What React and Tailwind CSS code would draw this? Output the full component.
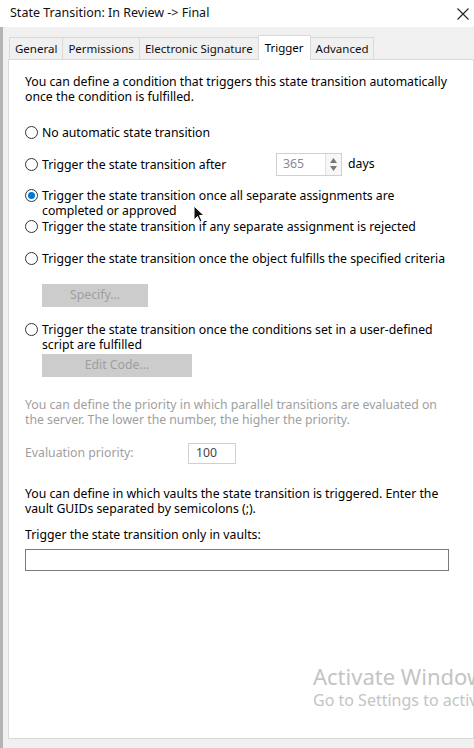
import React from "react";

const font = { fontFamily: '"Noto Sans", "Open Sans", sans-serif' };

function Radio({ checked }) {
  return (
    <span className="mt-[1px] flex h-[13px] w-[13px] shrink-0 items-center justify-center rounded-full border border-[#333] bg-white">
      {checked && <span className="h-[7px] w-[7px] rounded-full bg-[#0078d7]" />}
    </span>
  );
}

function Option({ checked, children, className = "" }) {
  return (
    <div className={"flex items-start gap-[4px] " + className}>
      <Radio checked={checked} />
      <div className="leading-[15px]">{children}</div>
    </div>
  );
}

function Tab({ children, active }) {
  if (active) {
    return (
      <div className="relative z-10 -mb-[1px] flex h-[25px] items-start border border-b-0 border-[#d9d9d9] bg-white px-[6px] pt-[3px] text-black">
        {children}
      </div>
    );
  }
  return (
    <div className="flex h-[22px] items-center border border-b-0 border-r-0 border-[#d9d9d9] bg-[#f0f0f0] px-[5px] text-[#111]">
      {children}
    </div>
  );
}

export default function App() {
  return (
    <div className="relative flex h-[748px] w-[474px] flex-col overflow-hidden bg-[#f0f0f0] text-[12.25px] text-black" style={font}>
      <div className="flex h-[27px] shrink-0 items-center justify-between bg-white pl-[10px] pr-[2px]">
        <span className="text-[12.5px] text-[#111]">State Transition: In Review -&gt; Final</span>
        <svg width="14" height="14" viewBox="0 0 14 14" className="mr-[2px]">
          <path d="M1.5 1.5 L12.5 12.5 M12.5 1.5 L1.5 12.5" stroke="#222" strokeWidth="1.1" />
        </svg>
      </div>
      <div className="flex flex-1 flex-col border-l-[3px] border-[#b4b4b4] pl-[5px]">
        <div className="mt-[8px] flex items-end pl-[1px] text-[11.5px]">
          <Tab>General</Tab>
          <Tab>Permissions</Tab>
          <Tab>Electronic Signature</Tab>
          <Tab active>Trigger</Tab>
          <div className="flex h-[22px] items-center border border-b-0 border-l-0 border-[#d9d9d9] bg-[#f0f0f0] px-[5px] text-[#111]">Advanced</div>
        </div>
        <div className="relative flex h-[680px] w-[466px] flex-col border border-[#d9d9d9] bg-white pl-[16px] pr-[22px] pt-[14px]">
          <p className="leading-[15px]">
            You can define a condition that triggers this state transition automatically once the condition is fulfilled.
          </p>
          <Option className="mt-[21px]">No automatic state transition</Option>
          <div className="mt-[13px] flex items-center">
            <div className="w-[251px]">
              <Option>Trigger the state transition after</Option>
            </div>
            <div className="flex h-[23px] w-[66px] items-stretch border border-[#d0d0d0] bg-white">
              <span className="flex flex-1 items-center pl-[6px] text-[#8a8a8a]">365</span>
              <span className="flex w-[16px] flex-col items-center justify-center border-l border-[#e0e0e0] bg-[#f7f7f7] text-[#666]">
                <svg width="7" height="5" viewBox="0 0 7 5"><path d="M0 5 L3.5 0 L7 5 Z" fill="#777" /></svg>
                <svg width="7" height="5" viewBox="0 0 7 5" className="mt-[3px]"><path d="M0 0 L3.5 5 L7 0 Z" fill="#777" /></svg>
              </span>
            </div>
            <span className="ml-[6px]">days</span>
          </div>
          <Option checked className="mt-[12px]">
            Trigger the state transition once all separate assignments are<br />completed or approved
          </Option>
          <Option className="mt-[1px]">Trigger the state transition if any separate assignment is rejected</Option>
          <Option className="mt-[17px]">Trigger the state transition once the object fulfills the specified criteria</Option>
          <div className="ml-[17px] mt-[18px] flex h-[23px] w-[106px] items-center justify-center bg-[#cccccc] text-[#9e9e9e]">Specify...</div>
          <Option className="mt-[15px]">
            Trigger the state transition once the conditions set in a user-defined<br />script are fulfilled
          </Option>
          <div className="ml-[17px] mt-[2px] flex h-[23px] w-[150px] items-center justify-center bg-[#cccccc] text-[#9e9e9e]">Edit Code...</div>
          <p className="mt-[20px] leading-[15px] text-[#a0a0a0]">
            You can define the priority in which parallel transitions are evaluated on the server. The lower the number, the higher the priority.
          </p>
          <div className="mt-[16px] flex items-center">
            <span className="w-[163px] text-[#a0a0a0]">Evaluation priority:</span>
            <div className="flex h-[21px] w-[48px] items-center border border-[#d0d0d0] pl-[7px] text-[#444]">100</div>
          </div>
          <p className="mt-[22px] leading-[15px]">
            You can define in which vaults the state transition is triggered. Enter the vault GUIDs separated by semicolons (;).
          </p>
          <div className="mt-[11px] leading-[15px]">Trigger the state transition only in vaults:</div>
          <div className="mt-[7px] h-[22px] w-[424px] border border-[#7a7a7a] bg-white" />
          <svg width="14" height="20" viewBox="0 0 14 20" className="absolute left-[184px] top-[145px]">
            <path d="M1 1 L1 15 L4.5 11.5 L7 17 L9 16 L6.5 10.5 L11 10.5 Z" fill="#111" stroke="#fff" strokeWidth="1" />
          </svg>
          <div className="pointer-events-none absolute left-[304px] top-[603px] whitespace-nowrap text-[#c4c4c4]">
            <div className="text-[22px] leading-[27px]">Activate Windows</div>
            <div className="text-[16px] leading-[21px]">Go to Settings to activate Windows.</div>
          </div>
        </div>
        <div className="mt-[9px] flex gap-[8px] pl-[205px]">
          <div className="h-[20px] w-[82px] border border-[#0078d7] bg-[#e5f1fb]" />
          <div className="h-[20px] w-[82px] border border-[#adadad] bg-[#e1e1e1]" />
          <div className="h-[20px] w-[82px] border border-[#adadad] bg-[#e1e1e1]" />
        </div>
      </div>
    </div>
  );
}
